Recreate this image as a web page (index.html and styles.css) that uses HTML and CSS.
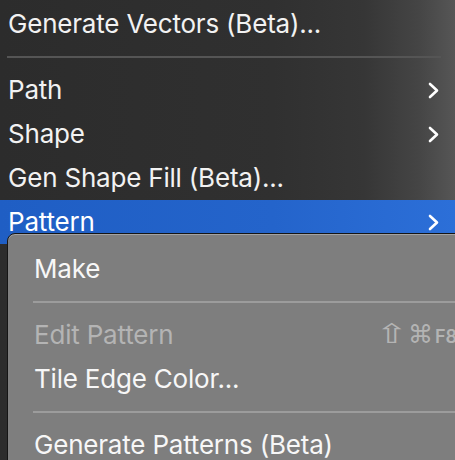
FILE: index.html
```html
<!DOCTYPE html>
<html>
<head>
<meta charset="utf-8">
<link rel="stylesheet" href="styles.css">
</head>
<body>
<div class="screen">
  <div class="menu">
    <div class="item"><span class="label">Generate Vectors (Beta)...</span></div>
    <div class="sep"></div>
    <div class="item"><span class="label">Path</span><svg class="chev" viewBox="0 0 11 17"><path d="M2 2 L9 8.5 L2 15"/></svg></div>
    <div class="item"><span class="label">Shape</span><svg class="chev" viewBox="0 0 11 17"><path d="M2 2 L9 8.5 L2 15"/></svg></div>
    <div class="item"><span class="label">Gen Shape Fill (Beta)...</span></div>
    <div class="item active"><span class="label">Pattern</span><svg class="chev" viewBox="0 0 11 17"><path d="M2 2 L9 8.5 L2 15"/></svg></div>
    <div class="item blank"></div>
  </div>
  <div class="submenu">
    <div class="sitem"><span class="label">Make</span></div>
    <div class="ssep"></div>
    <div class="sitem disabled"><span class="label">Edit Pattern</span><span class="shortcut"><span class="sym shift">⇧</span><span class="sym cmd">⌘</span><span class="fkey">F8</span></span></div>
    <div class="sitem"><span class="label">Tile Edge Color...</span></div>
    <div class="ssep"></div>
    <div class="sitem"><span class="label">Generate Patterns (Beta)</span></div>
  </div>
</div>
</body>
</html>
```

FILE: styles.css
```css
html, body {
  margin: 0;
  padding: 0;
  background: #2e2e2e;
}
.screen {
  position: relative;
  width: 455px;
  height: 460px;
  overflow: hidden;
  font-family: Inter, "Noto Sans", "DejaVu Sans", sans-serif;
  font-size: 26px;
  font-weight: 400;
  color: #f2f2f2;
  background: linear-gradient(to right, #2c2c2c 0%, #303030 60%, #363636 80%, #454545 92%, #565656 100%);
}
.menu {
  padding-top: 2px;
}
.item {
  height: 44px;
  display: flex;
  align-items: center;
  justify-content: space-between;
  padding: 0 16px 0 8px;
}
.label {
  letter-spacing: -0.2px;
  line-height: 44px;
}
.chev {
  width: 11px;
  height: 17px;
  fill: none;
  stroke: #ffffff;
  stroke-width: 2.6;
  stroke-linecap: round;
  stroke-linejoin: round;
}
.item.active {
  background: linear-gradient(to right, #1f5ec4 0%, #2464cb 60%, #2c6fd8 100%);
  color: #ffffff;
}
.sep {
  height: 22px;
  display: flex;
  align-items: center;
  padding: 0 14px 0 7px;
}
.sep::before {
  content: "";
  flex: 1;
  height: 2px;
  background: #555555;
}
.submenu {
  position: absolute;
  left: 7px;
  top: 233px;
  width: 480px;
  height: 260px;
  box-sizing: border-box;
  background: #7e7e7e;
  border: 1px solid #151515;
  border-radius: 8px 0 0 0;
  box-shadow: inset 0 1px 0 #a3a3a3;
  padding-top: 13px;
}
.sitem {
  height: 44px;
  display: flex;
  align-items: center;
  padding-left: 26px;
  color: #f7f7f7;
}
.sitem.disabled {
  color: #b4b4b4;
}
.shortcut {
  margin-left: auto;
  display: flex;
  align-items: baseline;
  width: 106px;
  line-height: 44px;
}
.sym {
  font-family: "DejaVu Sans", sans-serif;
  font-weight: 400;
  display: inline-block;
  text-align: center;
}
.shift {
  font-size: 27px;
  width: 20px;
  transform: scaleX(1.45);
  margin-right: 8px;
}
.cmd {
  font-size: 25px;
  width: 20px;
  margin-right: 7px;
}
.fkey {
  font-size: 18px;
  font-weight: 600;
}
.ssep {
  height: 22px;
  display: flex;
  align-items: center;
  padding-left: 25px;
}
.ssep::before {
  content: "";
  flex: 1;
  height: 2px;
  background: #9c9c9c;
}
```
